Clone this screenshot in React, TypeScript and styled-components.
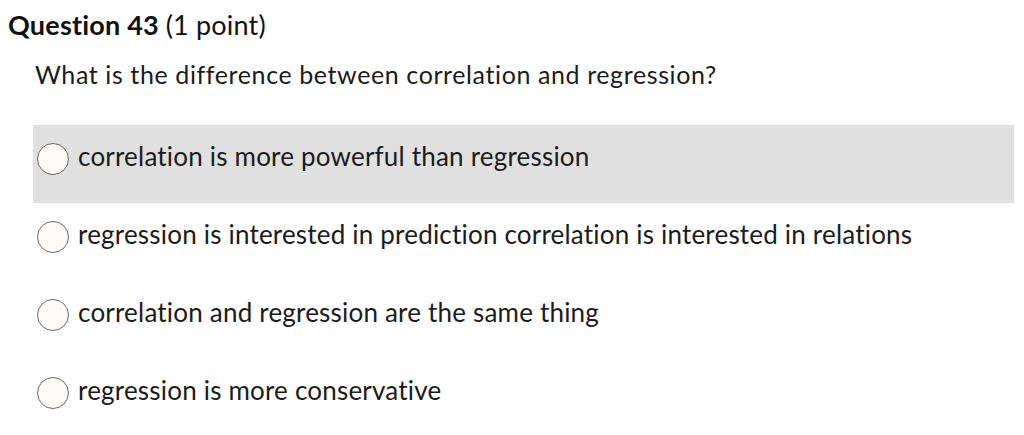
import React from "react";
import styled, { createGlobalStyle } from "styled-components";

const Global = createGlobalStyle`
  html, body { margin: 0; padding: 0; background: #ffffff; }
  body {
    font-family: Lato, "Open Sans", sans-serif;
    color: #1b1b1b;
    font-variant-ligatures: none;
    font-feature-settings: "liga" 0, "clig" 0;
  }
`;

const Page = styled.div`
  width: 1024px;
  height: 435px;
  overflow: hidden;
  box-sizing: border-box;
  padding: 8px 10px 0 8px;
`;

const Title = styled.h1`
  margin: 0;
  font-size: 27px;
  line-height: 34px;
  letter-spacing: 0.2px;
  font-weight: 700;
  color: #111;
  span { font-weight: 400; }
`;

const Prompt = styled.p`
  margin: 17px 0 0 27px;
  font-size: 25px;
  line-height: 30px;
  letter-spacing: 0.6px;
  color: #1b1b1b;
`;

const Options = styled.div`
  display: flex;
  flex-direction: column;
  margin: 36px 0 0 25px;
`;

const Option = styled.label<{ $active?: boolean }>`
  display: flex;
  align-items: center;
  gap: 9px;
  height: 78px;
  padding: 0 0 11px 4px;
  box-sizing: border-box;
  background: ${(p) => (p.$active ? "#e0e0e0" : "transparent")};
  color: #1b1b1b;
`;

const Radio = styled.span`
  width: 32px;
  height: 32px;
  box-sizing: border-box;
  border-radius: 50%;
  border: 1.5px solid #6a6a6a;
  background: #fdfaf8;
  flex: 0 0 auto;
`;

const Text = styled.span`
  font-size: 26px;
  line-height: 30px;
  letter-spacing: 0.2px;
  margin-bottom: 5px;
`;

const items = [
  "correlation is more powerful than regression",
  "regression is interested in prediction correlation is interested in relations",
  "correlation and regression are the same thing",
  "regression is more conservative",
];

export default function App() {
  return (
    <Page>
      <Global />
      <Title>
        Question 43 <span>(1 point)</span>
      </Title>
      <Prompt>What is the difference between correlation and regression?</Prompt>
      <Options>
        {items.map((t, i) => (
          <Option key={t} $active={i === 0}>
            <Radio />
            <Text>{t}</Text>
          </Option>
        ))}
      </Options>
    </Page>
  );
}
